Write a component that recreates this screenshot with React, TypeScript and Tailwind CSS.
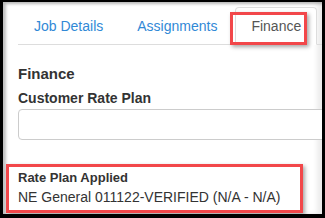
export default function App() {
  return (
    <div className="w-[325px] h-[218px] bg-black pt-[2px] pl-[3px] pr-[3px] pb-[4px] font-['Liberation_Sans',Arial,sans-serif]">
      <div className="relative h-full bg-white overflow-hidden pl-[15px] pt-[5px] shadow-[inset_3px_2px_3px_rgba(0,0,0,0.25),inset_-5px_0_5px_rgba(0,0,0,0.08)]">
        {/* tabs */}
        <ul className="flex w-[330px] border-b border-[#ddd] text-[14px] leading-5">
          <li className="mb-[-1px] mr-[2px]">
            <a className="block border border-transparent rounded-t px-[15px] py-2 text-[#3189d6]">Job Details</a>
          </li>
          <li className="mb-[-1px] mr-[2px]">
            <a className="block border border-transparent rounded-t px-[15px] py-2 text-[#3189d6]">Assignments</a>
          </li>
          <li className="mb-[-1px]">
            <a className="block border border-[#ddd] border-b-white rounded-t px-[15px] py-2 bg-white text-[#555]">Finance</a>
          </li>
        </ul>

        <div className="text-[#333]">
          <h4 className="mt-[19px] text-[15px] leading-5 font-bold">Finance</h4>
          <label className="block mt-[4px] text-[14px] leading-5 font-bold">Customer Rate Plan</label>
          <div className="mt-[1px] w-[330px] h-[31px] border border-[#ccc] rounded bg-white" />

          <div className="mt-[29px] text-[13px] leading-[18px] font-bold">Rate Plan Applied</div>
          <div className="text-[14px] leading-5">NE General 011122-VERIFIED (N/A - N/A)</div>
        </div>

        {/* annotation boxes */}
        <div className="absolute left-[227px] top-[10px] w-[77px] h-[33px] border-[3px] border-[#f2474a] shadow-[2px_2px_4px_rgba(0,0,0,0.35)]" />
        <div className="absolute left-[3px] top-[162px] w-[297px] h-[49px] border-[3px] border-[#f2474a] shadow-[2px_2px_4px_rgba(0,0,0,0.35)]" />
      </div>
    </div>
  );
}
